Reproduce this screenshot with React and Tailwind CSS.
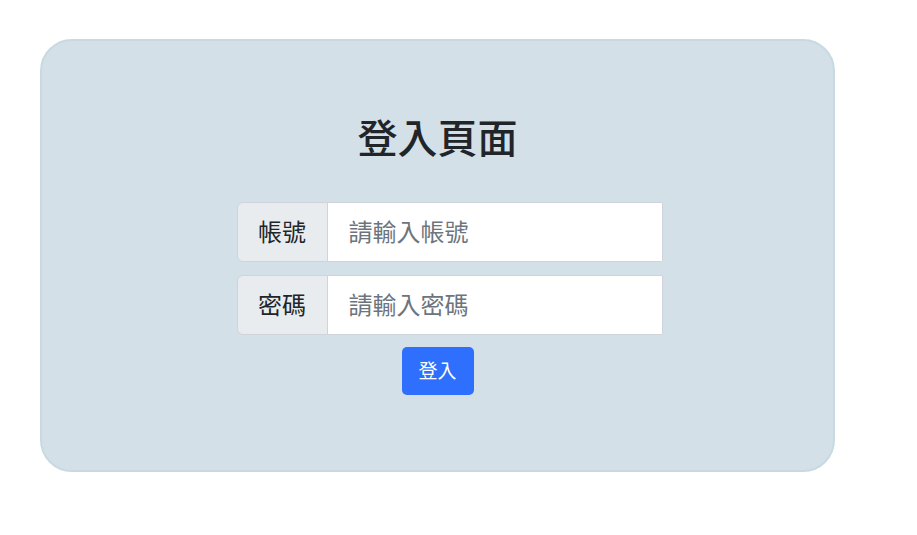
export default function App() {
  const font = { fontFamily: '"Noto Sans", "Noto Sans CJK TC", sans-serif' };
  return (
    <div className="w-[917px] h-[535px] bg-white" style={font}>
      <div className="pt-[39px] pl-[40px]">
        <div className="w-[795px] h-[433px] rounded-[32px] border-2 border-[#c9d9e1] bg-[#d3e0e7] flex flex-col items-center pt-[73px]">
          <h1 className="text-[40px] leading-[48px] font-medium text-[#212529]">登入頁面</h1>
          <div className="mt-[40px] ml-[24px] flex flex-col gap-[13px]">
            {[
              ["帳號", "請輸入帳號"],
              ["密碼", "請輸入密碼"],
            ].map(([label, ph]) => (
              <div key={label} className="flex w-[426px] h-[60px]">
                <span className="w-[91px] flex items-center justify-center bg-[#e9ecef] border border-[#ced4da] rounded-l-[6px] text-[24px] text-[#212529]">
                  {label}
                </span>
                <input
                  type="text"
                  placeholder={ph}
                  className="flex-1 min-w-0 bg-white border border-l-0 border-[#ced4da] rounded-r-[2px] px-[21px] text-[24px] text-[#212529] placeholder:text-[#6c757d] outline-none"
                  style={font}
                />
              </div>
            ))}
          </div>
          <button className="mt-[12px] w-[72px] h-[48px] rounded-[5px] bg-[#2e6ffd] text-white text-[19px]" style={font}>
            登入
          </button>
        </div>
      </div>
    </div>
  );
}
